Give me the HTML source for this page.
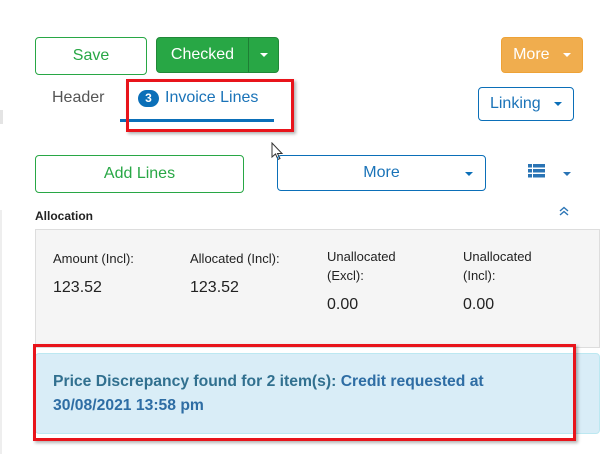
<!DOCTYPE html>
<html><head><meta charset="utf-8"><style>
*{box-sizing:border-box;margin:0;padding:0}
body{width:610px;height:454px;background:#fff;font-family:"Liberation Sans",Arial,sans-serif;position:relative;overflow:hidden;font-size:14px}
.a{position:absolute}
.btn{position:absolute;border-radius:4px;display:flex;align-items:center;justify-content:center;font-size:16px}
.car{display:inline-block;width:0;height:0;border-left:4px solid transparent;border-right:4px solid transparent;border-top:4px solid currentColor}
.lab{font-size:13px;color:#222;line-height:19px}
.val{font-size:16px;color:#222}
</style></head><body>
<div class="a" style="left:0;top:110px;width:3px;height:14px;background:#e4e4e4"></div>
<div class="a" style="left:0;top:210px;width:2px;height:244px;background:#eee"></div>

<div class="btn" style="left:35px;top:37px;width:112px;height:38px;border:1px solid #28a745;color:#28a745">Save</div>
<div class="btn" style="left:156px;top:37px;width:123px;height:36px;background:#28a745;border:1px solid #218838;color:#fff;justify-content:flex-start">
 <span style="width:91px;text-align:center">Checked</span>
 <span style="width:1px;height:34px;background:#1e7e34"></span>
 <span style="flex:1;text-align:center;color:#fff"><span class="car" style="vertical-align:middle"></span></span></div>
<div class="btn" style="left:501px;top:37px;width:82px;height:36px;background:#f0ad4e;border:1px solid #eea236;color:#fff">More&nbsp;&nbsp;&nbsp;<span class="car"></span></div>

<div class="a" style="left:52px;top:89px;font-size:16px;color:#555">Header</div>
<div class="a" style="left:138px;top:90px;width:21px;height:17px;border-radius:9px;background:#0b6fb8;color:#fff;font-size:12px;font-weight:bold;text-align:center;line-height:17px">3</div>
<div class="a" style="left:165px;top:89px;font-size:16px;color:#1a73b8">Invoice Lines</div>
<div class="a" style="left:120px;top:119px;width:154px;height:3px;background:#0b6fb8"></div>
<div class="a" style="left:126px;top:79px;width:168px;height:53px;border:3px solid #e8141b;box-shadow:2px 2px 3px rgba(0,0,0,.3)"></div>

<div class="btn" style="left:478px;top:87px;width:96px;height:34px;border:1px solid #0b6fb8;color:#1a73b8">Linking&nbsp;&nbsp;&nbsp;<span class="car" style="color:#0b6fb8"></span></div>

<svg class="a" style="left:271px;top:142px" width="16" height="20" viewBox="0 0 16 20"><path d="M1 1 L1 15 L4.5 12 L7 17.5 L9 16.5 L6.5 11.5 L11 11.5 Z" fill="#fff" stroke="#333" stroke-width="1"/></svg>

<div class="btn" style="left:35px;top:155px;width:209px;height:38px;border:1px solid #28a745;color:#28a745">Add Lines</div>
<div class="btn" style="left:277px;top:155px;width:209px;height:36px;border:1px solid #0b6fb8;color:#1a73b8">More<span class="car" style="position:absolute;right:12px;top:16px;color:#0b6fb8"></span></div>
<svg class="a" style="left:528px;top:164px" width="18" height="14" viewBox="0 0 18 14"><g fill="#2a74b5"><rect x="0" y="0" width="4" height="3.5"/><rect x="5" y="0" width="12" height="3.5"/><rect x="0" y="5" width="4" height="3.5"/><rect x="5" y="5" width="12" height="3.5"/><rect x="0" y="10" width="4" height="3.5"/><rect x="5" y="10" width="12" height="3.5"/></g></svg>
<span class="car a" style="left:563px;top:172px;color:#2a74b5"></span>

<div class="a" style="left:35px;top:209px;font-size:12px;font-weight:bold;color:#222">Allocation</div>
<svg class="a" style="left:558px;top:205px" width="12" height="12" viewBox="0 0 12 12"><path d="M2 6 L6 2.5 L10 6 M2 10 L6 6.5 L10 10" fill="none" stroke="#2a74b5" stroke-width="1.4"/></svg>
<div class="a" style="left:300px;top:229px;width:265px;height:1px;background:#ccc"></div>

<div class="a" style="left:35px;top:229px;width:565px;height:119px;background:#f5f5f5;border:1px solid #ddd"></div>
<div class="a lab" style="left:53px;top:249px">Amount (Incl):</div>
<div class="a val" style="left:53px;top:279px">123.52</div>
<div class="a lab" style="left:190px;top:249px">Allocated (Incl):</div>
<div class="a val" style="left:190px;top:279px">123.52</div>
<div class="a lab" style="left:327px;top:247px">Unallocated<br>(Excl):</div>
<div class="a val" style="left:327px;top:296px">0.00</div>
<div class="a lab" style="left:463px;top:247px">Unallocated<br>(Incl):</div>
<div class="a val" style="left:463px;top:296px">0.00</div>

<div class="a" style="left:35px;top:353px;width:565px;height:81px;background:#d9edf7;border:1px solid #bce8f1;border-radius:4px"></div>
<div class="a" style="left:53px;top:370px;font-size:15.7px;font-weight:bold;color:#31708f;line-height:24px;white-space:nowrap">Price Discrepancy found for 2 item(s): <span style="color:#2e6da4">Credit requested at</span><br><span style="color:#2e6da4">30/08/2021 13:58 pm</span></div>
<div class="a" style="left:33px;top:344px;width:543px;height:97px;border:3px solid #e8141b;box-shadow:2px 2px 3px rgba(0,0,0,.3)"></div>
</body></html>
